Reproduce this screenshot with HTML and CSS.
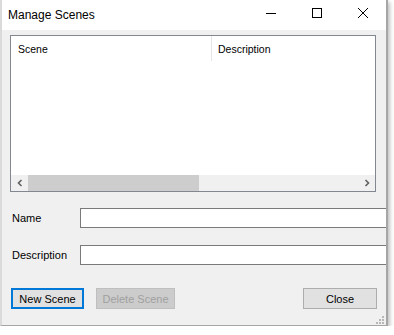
FILE: index.html
```html
<!DOCTYPE html>
<html>
<head>
<meta charset="utf-8">
<link rel="stylesheet" href="styles.css">
</head>
<body>
<div class="window">
  <div class="titlebar">
    <div class="title">Manage Scenes</div>
    <div class="caption">
      <div class="cbtn"><svg width="12" height="12" viewBox="0 0 12 12"><line x1="1" y1="6.5" x2="11" y2="6.5" stroke="#000" stroke-width="1"/></svg></div>
      <div class="cbtn"><svg width="12" height="12" viewBox="0 0 12 12"><rect x="1.5" y="1.5" width="9" height="9" fill="none" stroke="#000" stroke-width="1"/></svg></div>
      <div class="cbtn"><svg width="12" height="12" viewBox="0 0 12 12"><path d="M1 1 L11 11 M11 1 L1 11" stroke="#000" stroke-width="1" fill="none"/></svg></div>
    </div>
  </div>
  <div class="client">
    <div class="listview">
      <div class="lv-header">
        <div class="col col-scene">Scene</div>
        <div class="col col-desc">Description</div>
      </div>
      <div class="lv-body"></div>
      <div class="hscroll">
        <div class="arrow"><svg width="8" height="8" viewBox="0 0 8 8"><path d="M5.5 1 L2.5 4 L5.5 7" stroke="#606060" stroke-width="1.6" fill="none"/></svg></div>
        <div class="track"><div class="thumb"></div></div>
        <div class="arrow"><svg width="8" height="8" viewBox="0 0 8 8"><path d="M2.5 1 L5.5 4 L2.5 7" stroke="#606060" stroke-width="1.6" fill="none"/></svg></div>
      </div>
    </div>
    <div class="field field-name">
      <label class="lbl">Name</label>
      <div class="textbox"></div>
    </div>
    <div class="field field-desc">
      <label class="lbl">Description</label>
      <div class="textbox"></div>
    </div>
    <div class="buttons">
      <div class="btn btn-new">New Scene</div>
      <div class="btn btn-del">Delete Scene</div>
      <div class="spacer"></div>
      <div class="btn btn-close">Close</div>
    </div>
  </div>
  <div class="grip">
    <svg width="9" height="9" viewBox="0 0 9 9">
      <rect x="6" y="0" width="2" height="2" fill="#b8b8b8"/>
      <rect x="3" y="3" width="2" height="2" fill="#b8b8b8"/>
      <rect x="6" y="3" width="2" height="2" fill="#b8b8b8"/>
      <rect x="0" y="6" width="2" height="2" fill="#b8b8b8"/>
      <rect x="3" y="6" width="2" height="2" fill="#b8b8b8"/>
      <rect x="6" y="6" width="2" height="2" fill="#b8b8b8"/>
    </svg>
  </div>
</div>
</body>
</html>
```
FILE: styles.css
```css
html, body {
  margin: 0;
  padding: 0;
  background: #ffffff;
}
body {
  font-family: "Liberation Sans", Arial, sans-serif;
  font-size: 11px;
  color: #000;
}
.window {
  position: relative;
  width: 384px;
  height: 325px;
  border-left: 2px solid #dadada;
  border-right: 2px solid #a6a6a6;
  border-bottom: 1px solid #a6a6a6;
  box-shadow: 2px 2px 4px rgba(0,0,0,0.25);
  background: #f0f0f0;
  overflow: hidden;
  display: flex;
  flex-direction: column;
}
.titlebar {
  height: 30px;
  background: #ffffff;
  display: flex;
  align-items: center;
  flex-shrink: 0;
}
.title {
  font-size: 12px;
  padding-left: 6px;
  flex: 1;
  margin-top: -1px;
}
.caption {
  display: flex;
  height: 30px;
}
.cbtn {
  width: 46px;
  height: 30px;
  display: flex;
  align-items: center;
  justify-content: center;
  margin-top: -2px;
}
.client {
  flex: 1;
  padding-top: 5px;
  padding-left: 8px;
  display: flex;
  flex-direction: column;
}
.listview {
  width: 364px;
  height: 155px;
  border: 1px solid #828790;
  background: #fff;
  display: flex;
  flex-direction: column;
}
.lv-header {
  height: 25px;
  display: flex;
  font-size: 10.5px;
}
.col {
  display: flex;
  align-items: center;
  padding-left: 7px;
}
.col-scene {
  width: 193px;
  border-right: 1px solid #e5e5e5;
}
.col-desc {
  flex: 1;
  padding-left: 6px;
}
.lv-body {
  flex: 1;
}
.hscroll {
  height: 16px;
  display: flex;
  background: #f0f0f0;
}
.arrow {
  width: 17px;
  display: flex;
  align-items: center;
  justify-content: center;
}
.track {
  flex: 1;
  display: flex;
}
.thumb {
  width: 171px;
  margin-left: 0px;
  background: #cdcdcd;
}
.field {
  display: flex;
  align-items: center;
  margin-left: 2px;
}
.field-name {
  margin-top: 16px;
}
.field-desc {
  margin-top: 17px;
}
.lbl {
  width: 68px;
}
.textbox {
  flex: 1;
  height: 18px;
  border: 1px solid #7a7a7a;
  background: #fff;
  margin-right: -2px;
}
.buttons {
  display: flex;
  margin-top: 23px;
  margin-left: 1px;
  width: 366px;
}
.btn {
  height: 19px;
  display: flex;
  align-items: center;
  justify-content: center;
  background: #e1e1e1;
  border: 1px solid #adadad;
}
.btn-new {
  width: 69px;
  height: 17px;
  border: 2px solid #0078d7;
}
.btn-del {
  width: 77px;
  margin-left: 12px;
  background: #cccccc;
  border-color: #bfbfbf;
  color: #a0a0a0;
}
.spacer {
  flex: 1;
}
.btn-close {
  width: 72px;
}
.grip {
  position: absolute;
  right: 1px;
  bottom: 1px;
  width: 9px;
  height: 9px;
}
```
